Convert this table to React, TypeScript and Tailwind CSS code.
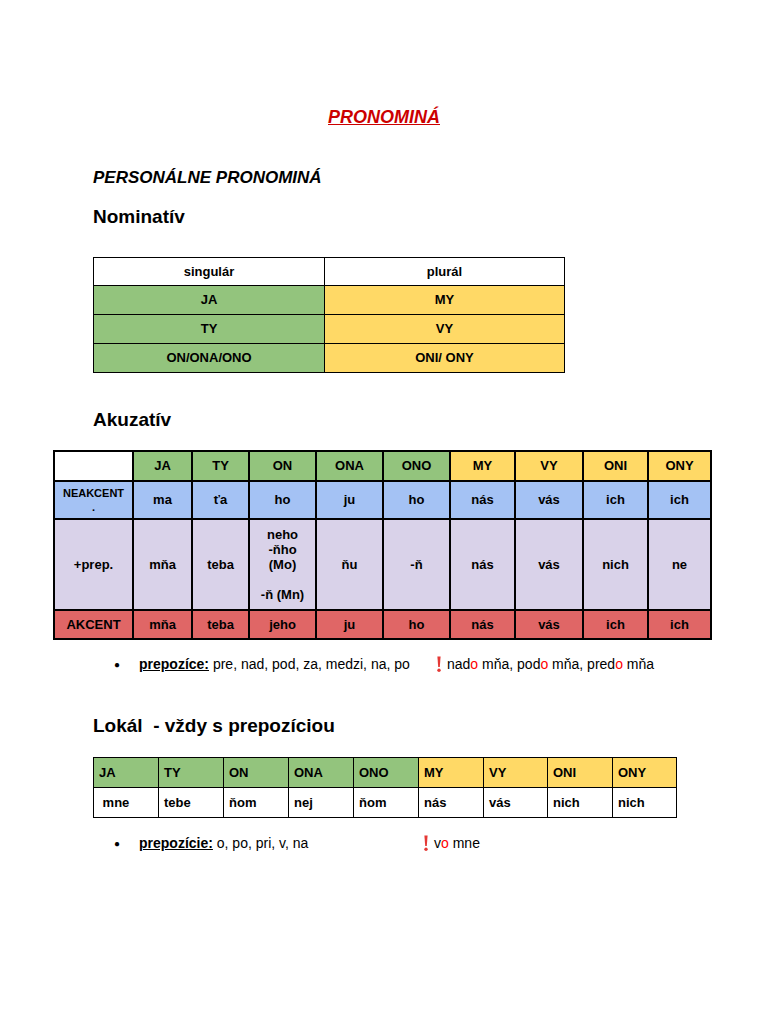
const font = { fontFamily: '"Liberation Sans", Arial, sans-serif' };

const G = "bg-[#93c47d]";
const Y = "bg-[#ffd966]";
const B = "bg-[#a4c2f4]";
const L = "bg-[#d9d2e9]";
const R = "bg-[#e06666]";

const akuWidths = [79, 59, 57, 67, 67, 67, 65, 68, 65, 63];

const akuHead = ["JA", "TY", "ON", "ONA", "ONO", "MY", "VY", "ONI", "ONY"];
const neak = ["ma", "ťa", "ho", "ju", "ho", "nás", "vás", "ich", "ich"];
const prep = ["mňa", "teba", "", "ňu", "-ň", "nás", "vás", "nich", "ne"];
const akc = ["mňa", "teba", "jeho", "ju", "ho", "nás", "vás", "ich", "ich"];

const lokHead = ["JA", "TY", "ON", "ONA", "ONO", "MY", "VY", "ONI", "ONY"];
const lokVals = ["\u00a0mne", "tebe", "ňom", "nej", "ňom", "nás", "vás", "nich", "nich"];
const lokWidths = [65, 65, 65, 65, 65, 65, 64, 65, 64];

const Excl = () => (
  <svg width="8" height="18" viewBox="0 0 8 18" className="inline-block align-middle">
    <path d="M2.4 1.5 L5.6 1.5 L4.8 12 L3.2 12 Z" fill="#e53935" />
    <circle cx="4" cy="15.2" r="1.7" fill="#e53935" />
  </svg>
);

const Red = ({ children }: { children: string }) => <span className="text-[#ff0000]">{children}</span>;

export default function App() {
  return (
    <div className="w-[768px] min-h-[1024px] bg-white text-black" style={font}>
      <div className="pt-[105px] h-[129px] flex justify-center">
        <span className="h-[24px] leading-[24px] text-[18px] font-bold italic underline text-[#cc0000]">
          PRONOMINÁ
        </span>
      </div>

      <div className="pl-[93px]">
        <div className="mt-[37px] h-[24px] leading-[24px] text-[17px] font-bold italic">PERSONÁLNE PRONOMINÁ</div>
        <div className="mt-[13px] h-[28px] leading-[28px] text-[19px] font-bold">Nominatív</div>

        <table className="mt-[26px] border-collapse text-[13px] font-bold text-center">
          <tbody>
            <tr className="h-[28px] bg-white">
              <td className="w-[231px] border border-black">singulár</td>
              <td className="w-[240px] border border-black">plurál</td>
            </tr>
            {[
              ["JA", "MY"],
              ["TY", "VY"],
              ["ON/ONA/ONO", "ONI/ ONY"],
            ].map(([a, b]) => (
              <tr key={a} className="h-[29px]">
                <td className={`border border-black ${G}`}>{a}</td>
                <td className={`border border-black ${Y}`}>{b}</td>
              </tr>
            ))}
          </tbody>
        </table>

        <div className="mt-[33px] h-[28px] leading-[28px] text-[19px] font-bold">Akuzatív</div>

        <table className="mt-[16px] -ml-[40px] border-collapse text-[13px] font-bold text-center table-fixed">
          <colgroup>
            {akuWidths.map((w, i) => (
              <col key={i} style={{ width: w }} />
            ))}
          </colgroup>
          <tbody>
            <tr className="h-[30px]">
              <td className="border-2 border-black bg-white"></td>
              {akuHead.map((h, i) => (
                <td key={i} className={`border-2 border-black ${i < 5 ? G : Y}`}>
                  {h}
                </td>
              ))}
            </tr>
            <tr className="h-[38px]">
              <td className={`border-2 border-black ${B} text-[11px] leading-[14px]`}>
                NEAKCENT
                <br />.
              </td>
              {neak.map((v, i) => (
                <td key={i} className={`border-2 border-black ${B}`}>
                  {v}
                </td>
              ))}
            </tr>
            <tr className="h-[91px]">
              <td className={`border-2 border-black ${L}`}>+prep.</td>
              {prep.map((v, i) => (
                <td key={i} className={`border-2 border-black ${L}`}>
                  {i === 2 ? (
                    <div className="leading-[15px]">
                      neho
                      <br />
                      -ňho
                      <br />
                      (Mo)
                      <br />
                      <br />
                      -ň (Mn)
                    </div>
                  ) : (
                    v
                  )}
                </td>
              ))}
            </tr>
            <tr className="h-[29px]">
              <td className={`border-2 border-black ${R}`}>AKCENT</td>
              {akc.map((v, i) => (
                <td key={i} className={`border-2 border-black ${R}`}>
                  {v}
                </td>
              ))}
            </tr>
          </tbody>
        </table>

        <div className="mt-[14px] h-[20px] flex items-center text-[14px]">
          <span className="w-[46px] pl-[21px] text-[10px]">●</span>
          <span className="w-[296px] whitespace-pre">
            <span className="font-bold underline">prepozíce:</span> pre, nad, pod, za, medzi, na, po
          </span>
          <Excl />
          <span className="ml-[4px]">
            nad<Red>o</Red> mňa, pod<Red>o</Red> mňa, pred<Red>o</Red> mňa
          </span>
        </div>

        <div className="mt-[38px] h-[28px] leading-[28px] text-[19px] font-bold whitespace-pre">Lokál  - vždy s prepozíciou</div>

        <table className="mt-[17px] border-collapse text-[13px] font-bold text-left table-fixed">
          <colgroup>
            {lokWidths.map((w, i) => (
              <col key={i} style={{ width: w }} />
            ))}
          </colgroup>
          <tbody>
            <tr className="h-[30px]">
              {lokHead.map((h, i) => (
                <td key={i} className={`border border-black px-[5px] ${i < 5 ? G : Y}`}>
                  {h}
                </td>
              ))}
            </tr>
            <tr className="h-[30px] bg-white">
              {lokVals.map((v, i) => (
                <td key={i} className="border border-black px-[5px]">
                  {v}
                </td>
              ))}
            </tr>
          </tbody>
        </table>

        <div className="mt-[15px] h-[20px] flex items-center text-[14px]">
          <span className="w-[46px] pl-[21px] text-[10px]">●</span>
          <span className="w-[283px]">
            <span className="font-bold underline">prepozície:</span> o, po, pri, v, na
          </span>
          <Excl />
          <span className="ml-[4px]">
            v<Red>o</Red> mne
          </span>
        </div>
      </div>
    </div>
  );
}
